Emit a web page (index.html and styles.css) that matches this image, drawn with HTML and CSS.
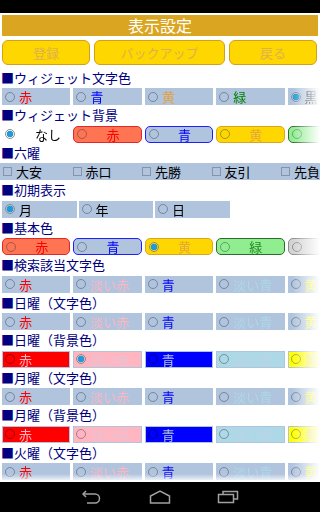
FILE: index.html
```html
<!DOCTYPE html>
<html lang="ja">
<head>
    <meta charset="UTF-8">
    <meta name="viewport" content="width=device-width, initial-scale=1.0">
    <title>表示設定</title>
    <link rel="stylesheet" href="styles.css">
</head>
<body>
    <div class="status-bar"></div>
    <div class="screen">
        <div class="title-bar">表示設定</div>
        <div class="toolbar">
            <button class="tool-button small">登録</button>
            <button class="tool-button wide">バックアップ</button>
            <button class="tool-button small">戻る</button>
        </div>

        <div class="settings">
            <div class="section-title">■ウィジェット文字色</div>
            <div class="choice-row">
                <div class="cell"><span class="radio"></span><span class="fg-red">赤</span></div>
                <div class="cell"><span class="radio"></span><span class="fg-blue">青</span></div>
                <div class="cell"><span class="radio"></span><span class="fg-orange">黄</span></div>
                <div class="cell"><span class="radio"></span><span class="fg-green">緑</span></div>
                <div class="cell"><span class="radio on"></span><span class="fg-black">黒</span></div>
            </div>

            <div class="section-title">■ウィジェット背景</div>
            <div class="choice-row">
                <div class="cell plain"><span class="radio on"></span><span class="none-label">なし</span></div>
                <div class="cell pill pill-red"><span class="radio"></span><span class="label">赤</span></div>
                <div class="cell pill pill-blue"><span class="radio"></span><span class="label">青</span></div>
                <div class="cell pill pill-gold"><span class="radio"></span><span class="label">黄</span></div>
                <div class="cell pill pill-green"><span class="radio"></span><span class="label"></span></div>
            </div>

            <div class="section-title">■六曜</div>
            <div class="check-row">
                <div class="check-item"><span class="check"></span>大安</div>
                <div class="check-item"><span class="check"></span>赤口</div>
                <div class="check-item"><span class="check"></span>先勝</div>
                <div class="check-item"><span class="check"></span>友引</div>
                <div class="check-item"><span class="check"></span>先負</div>
            </div>

            <div class="section-title">■初期表示</div>
            <div class="choice-row three">
                <div class="cell"><span class="radio on"></span><span class="fg-black">月</span></div>
                <div class="cell"><span class="radio"></span><span class="fg-black">年</span></div>
                <div class="cell"><span class="radio"></span><span class="fg-black">日</span></div>
            </div>

            <div class="section-title">■基本色</div>
            <div class="choice-row">
                <div class="cell pill pill-red"><span class="radio"></span><span class="label">赤</span></div>
                <div class="cell pill pill-blue"><span class="radio"></span><span class="label">青</span></div>
                <div class="cell pill pill-gold"><span class="radio on"></span><span class="label">黄</span></div>
                <div class="cell pill pill-green"><span class="radio"></span><span class="label">緑</span></div>
                <div class="cell pill pill-gray"><span class="radio"></span><span class="label"></span></div>
            </div>

            <div class="section-title">■検索該当文字色</div>
            <div class="choice-row">
                <div class="cell"><span class="radio"></span><span class="fg-red">赤</span></div>
                <div class="cell"><span class="radio"></span><span class="fg-pink">淡い赤</span></div>
                <div class="cell"><span class="radio"></span><span class="fg-blue">青</span></div>
                <div class="cell"><span class="radio"></span><span class="fg-lightblue">淡い青</span></div>
                <div class="cell"><span class="radio"></span><span class="fg-yellow">黄</span></div>
            </div>

            <div class="section-title">■日曜（文字色）</div>
            <div class="choice-row">
                <div class="cell"><span class="radio"></span><span class="fg-red">赤</span></div>
                <div class="cell"><span class="radio"></span><span class="fg-pink">淡い赤</span></div>
                <div class="cell"><span class="radio"></span><span class="fg-blue">青</span></div>
                <div class="cell"><span class="radio"></span><span class="fg-lightblue">淡い青</span></div>
                <div class="cell"><span class="radio"></span><span class="fg-yellow">黄</span></div>
            </div>

            <div class="section-title">■日曜（背景色）</div>
            <div class="choice-row">
                <div class="cell bg-red"><span class="radio"></span><span>赤</span></div>
                <div class="cell bg-pink"><span class="radio on"></span><span>淡い赤</span></div>
                <div class="cell bg-blue"><span class="radio"></span><span>青</span></div>
                <div class="cell bg-lightblue"><span class="radio"></span><span>淡い青</span></div>
                <div class="cell bg-yellow"><span class="radio"></span><span>黄</span></div>
            </div>

            <div class="section-title">■月曜（文字色）</div>
            <div class="choice-row">
                <div class="cell"><span class="radio"></span><span class="fg-red">赤</span></div>
                <div class="cell"><span class="radio"></span><span class="fg-pink">淡い赤</span></div>
                <div class="cell"><span class="radio"></span><span class="fg-blue">青</span></div>
                <div class="cell"><span class="radio"></span><span class="fg-lightblue">淡い青</span></div>
                <div class="cell"><span class="radio"></span><span class="fg-yellow">黄</span></div>
            </div>

            <div class="section-title">■月曜（背景色）</div>
            <div class="choice-row">
                <div class="cell bg-red"><span class="radio"></span><span>赤</span></div>
                <div class="cell bg-pink"><span class="radio"></span><span>淡い赤</span></div>
                <div class="cell bg-blue"><span class="radio"></span><span>青</span></div>
                <div class="cell bg-lightblue"><span class="radio"></span><span>淡い青</span></div>
                <div class="cell bg-yellow"><span class="radio"></span><span>黄</span></div>
            </div>

            <div class="section-title">■火曜（文字色）</div>
            <div class="choice-row">
                <div class="cell"><span class="radio"></span><span class="fg-red">赤</span></div>
                <div class="cell"><span class="radio"></span><span class="fg-pink">淡い赤</span></div>
                <div class="cell"><span class="radio"></span><span class="fg-blue">青</span></div>
                <div class="cell"><span class="radio"></span><span class="fg-lightblue">淡い青</span></div>
                <div class="cell"><span class="radio"></span><span class="fg-yellow">黄</span></div>
            </div>
        </div>
    </div>

    <div class="nav-bar">
        <svg class="nav-icon" width="24" height="16" viewBox="0 0 24 16" fill="none" stroke="#a0a0a0" stroke-width="1.5">
            <path d="M6 2 L3 5 L6 8"></path>
            <path d="M3.5 5 H15 A4.5 4.5 0 0 1 15 14 H7"></path>
        </svg>
        <svg class="nav-icon" width="24" height="16" viewBox="0 0 24 16" fill="none" stroke="#a0a0a0" stroke-width="1.5">
            <path d="M2.5 14 V7 L12 2 L21.5 7 V14 Z"></path>
        </svg>
        <svg class="nav-icon" width="24" height="16" viewBox="0 0 24 16" fill="none" stroke="#a0a0a0" stroke-width="1.5">
            <path d="M7 5 V2.5 H21.5 V10 H18"></path>
            <rect x="2.5" y="5.5" width="15" height="8"></rect>
        </svg>
    </div>
</body>
</html>
```

FILE: styles.css
```css
:root {
    --steel: #b0c4de;
    --navy: #000080;
    --gold: #ffd700;
    --goldenrod: #daa520;
}

* {
    margin: 0;
    padding: 0;
    box-sizing: border-box;
}

body {
    width: 320px;
    height: 512px;
    display: flex;
    flex-direction: column;
    overflow: hidden;
    background-color: white;
    font-family: "Noto Sans CJK JP", "Noto Sans", sans-serif;
    font-size: 13px;
    color: #000;
}

.status-bar {
    flex: none;
    height: 13px;
    background-color: #000;
}

.screen {
    flex: 1;
    overflow: hidden;
    position: relative;
}

/* fading edge at the bottom of the scroll view */
.screen::after {
    content: "";
    position: absolute;
    left: 0;
    right: 0;
    bottom: 0;
    height: 8px;
    background: linear-gradient(rgba(255, 255, 255, 0), #fff);
}

.title-bar {
    margin: 2px 2px 0;
    height: 21px;
    background-color: var(--goldenrod);
    color: white;
    font-size: 16px;
    line-height: 21px;
    text-align: center;
}

.toolbar {
    display: flex;
    gap: 4px;
    padding: 4px 3px 0 2px;
}

.tool-button {
    height: 25px;
    border: 1px solid #d4a017;
    border-radius: 6px;
    background-color: var(--gold);
    color: #deb04c;
    font-family: inherit;
    font-size: 13px;
}

.tool-button.small {
    flex: 2;
}

.tool-button.wide {
    flex: 3;
}

.settings {
    padding-top: 2.5px;
}

.section-title {
    height: 20.5px;
    line-height: 20.5px;
    padding-left: 1px;
    color: var(--navy);
    white-space: nowrap;
}

.choice-row {
    display: flex;
    gap: 3px;
    height: 17px;
    padding-left: 2px;
    overflow: hidden;
    -webkit-mask-image: linear-gradient(to right, #000 292px, transparent 320px);
    mask-image: linear-gradient(to right, #000 292px, transparent 320px);
}

.choice-row.three {
    gap: 2px;
}

.choice-row.three .cell {
    width: 74.5px;
}

.cell {
    flex: none;
    width: 68.4px;
    display: flex;
    align-items: center;
    gap: 4px;
    padding-left: 3px;
    background-color: var(--steel);
    white-space: nowrap;
    line-height: 17px;
}

.cell.plain {
    background-color: transparent;
}

.none-label {
    margin-left: 16px;
}

.radio {
    flex: none;
    width: 10px;
    height: 10px;
    border-radius: 50%;
    border: 1px solid rgba(40, 45, 60, 0.4);
}

.radio.on {
    border-color: #8c8c8c;
    background: radial-gradient(circle, #1e9bd8 0 3px, transparent 3.6px);
}

/* rounded colour swatches */
.pill {
    border: 1px solid;
    border-radius: 5px;
    padding-left: 3px;
}

.pill .label {
    flex: 1;
    text-align: center;
    padding-right: 6px;
}

.pill-red {
    background-color: #ff7452;
    border-color: #e02a2a;
    color: #ff0000;
}

.pill-blue {
    background-color: var(--steel);
    border-color: #1e1eff;
    color: #0000ff;
}

.pill-gold {
    background-color: var(--gold);
    border-color: var(--goldenrod);
    color: #e3a73c;
}

.pill-green {
    background-color: #90ee90;
    border-color: #2f6a2f;
    color: #228b22;
}

.pill-gray {
    background-color: #d3d3d3;
    border-color: #8a8a8a;
    color: #808080;
}

/* text colour choices */
.fg-red { color: #ff0000; }
.fg-blue { color: #0000ff; }
.fg-orange { color: #e6a13c; }
.fg-green { color: #008000; }
.fg-black { color: #000; }
.fg-pink { color: #ffb6c1; }
.fg-lightblue { color: #add8e6; }
.fg-yellow { color: #ffff00; }

/* background colour choices */
.bg-red,
.bg-pink,
.bg-blue,
.bg-lightblue,
.bg-yellow {
    border: 1px solid var(--steel);
    padding-left: 2px;
}

.bg-red {
    background-color: #ff0000;
    color: #ffb6c1;
}

.bg-red .radio {
    border-color: #a00000;
}

.bg-pink {
    background-color: #ffb6c1;
    color: #e4c3d6;
}

.bg-blue {
    background-color: #0000ff;
    color: #b0c4de;
}

.bg-blue .radio {
    border-color: #00009a;
}

.bg-lightblue {
    background-color: #add8e6;
    color: #bcd3e6;
}

.bg-yellow {
    background-color: #ffff00;
    color: #dedc9c;
}

.check-row {
    display: flex;
    height: 17px;
    padding-left: 3px;
    background-color: var(--steel);
    white-space: nowrap;
    line-height: 17px;
}

.check-item {
    flex: none;
    width: 69.5px;
    display: flex;
    align-items: center;
    gap: 4px;
}

.check {
    flex: none;
    width: 9px;
    height: 9px;
    border: 1px solid #8793a6;
}

.nav-bar {
    flex: none;
    height: 30px;
    background-color: #000;
    display: flex;
    align-items: center;
    justify-content: center;
    gap: 44px;
}

.nav-icon {
    display: block;
}
```
